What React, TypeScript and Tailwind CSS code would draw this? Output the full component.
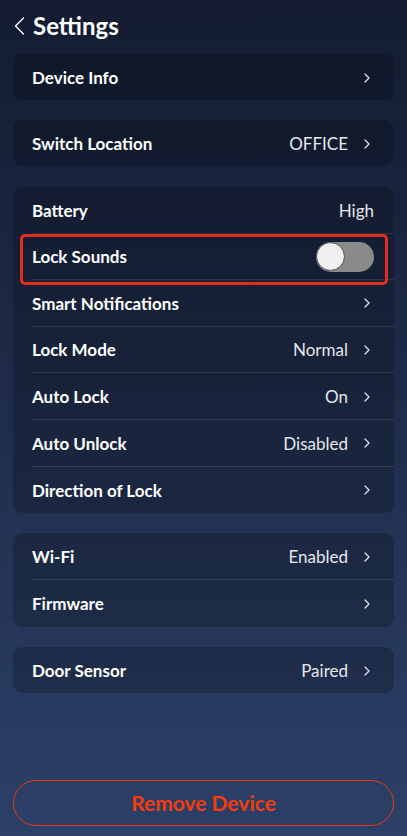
const font = { fontFamily: "Lato, 'Noto Sans', sans-serif" };

function Chevron() {
  return (
    <span className="w-[10px] ml-[16px] flex items-center">
      <svg width="6" height="10" viewBox="0 0 6 10" fill="none">
        <path d="M1 1l4 4-4 4" stroke="#e5e7eb" strokeWidth="1.2" strokeLinecap="round" strokeLinejoin="round" />
      </svg>
    </span>
  );
}

type Row = { label: string; value?: string; chevron?: boolean; toggle?: boolean };

function SettingRow({ row, last, h }: { row: Row; last: boolean; h: string }) {
  return (
    <div className="pl-[19px]">
      <div
        className={`${h} flex items-center pr-[20px] pt-[1px] ${last ? "" : "border-b border-white/10"}`}
      >
        <span className="flex-1 text-[17px] font-bold text-white">{row.label}</span>
        {row.value && <span className="text-[17px] text-gray-200">{row.value}</span>}
        {row.chevron && <Chevron />}
        {row.toggle && (
          <div className="w-[58px] h-[30px] rounded-full bg-[#8a8a8a] flex items-center">
            <div className="w-[29px] h-[29px] rounded-full bg-[#efefef] border border-[#4b4b4b]" />
          </div>
        )}
      </div>
    </div>
  );
}

function Card({
  rows,
  h = "h-[46px]",
  className = "",
  children,
}: {
  rows: Row[];
  h?: string;
  className?: string;
  children?: React.ReactNode;
}) {
  return (
    <div className={`relative rounded-[9px] bg-black/20 ${className}`}>
      {rows.map((r, i) => (
        <SettingRow key={r.label} row={r} h={h} last={i === rows.length - 1} />
      ))}
      {children}
    </div>
  );
}

export default function App() {
  return (
    <div
      className="min-h-screen flex flex-col px-[13px] bg-linear-to-b from-[#131c31] to-[#2c4068]"
      style={font}
    >
      {/* header */}
      <div className="h-[50px] flex items-center pl-[1px] pt-[1px]">
        <svg width="11" height="18" viewBox="0 0 11 18" fill="none">
          <path d="M9.5 1L1.5 9l8 8" stroke="white" strokeWidth="1.4" strokeLinecap="round" strokeLinejoin="round" />
        </svg>
        <h1 className="ml-[8px] text-[24px] font-bold text-white">Settings</h1>
      </div>

      <div className="mt-[4px] flex flex-col gap-[20px]">
        <Card rows={[{ label: "Device Info", chevron: true }]} />
        <Card rows={[{ label: "Switch Location", value: "OFFICE", chevron: true }]} />
        <Card
          className="mt-[1px]"
          h="h-[46.6px]"
          rows={[
            { label: "Battery", value: "High" },
            { label: "Lock Sounds", toggle: true },
            { label: "Smart Notifications", chevron: true },
            { label: "Lock Mode", value: "Normal", chevron: true },
            { label: "Auto Lock", value: "On", chevron: true },
            { label: "Auto Unlock", value: "Disabled", chevron: true },
            { label: "Direction of Lock", chevron: true },
          ]}
        >
          {/* highlight annotation */}
          <div className="absolute left-[7px] top-[47px] w-[368px] h-[51px] border-[3px] border-[#e52b1f] rounded-[5px] pointer-events-none" />
        </Card>
        <Card
          h="h-[47px]"
          rows={[
            { label: "Wi-Fi", value: "Enabled", chevron: true },
            { label: "Firmware", chevron: true },
          ]}
        />
        <Card rows={[{ label: "Door Sensor", value: "Paired", chevron: true }]} />
      </div>

      <button className="mt-auto mb-[10px] h-[46px] rounded-full border-[1.5px] border-[#e8380e] text-[21px] font-bold text-[#f23c0c]">
        Remove Device
      </button>
    </div>
  );
}
